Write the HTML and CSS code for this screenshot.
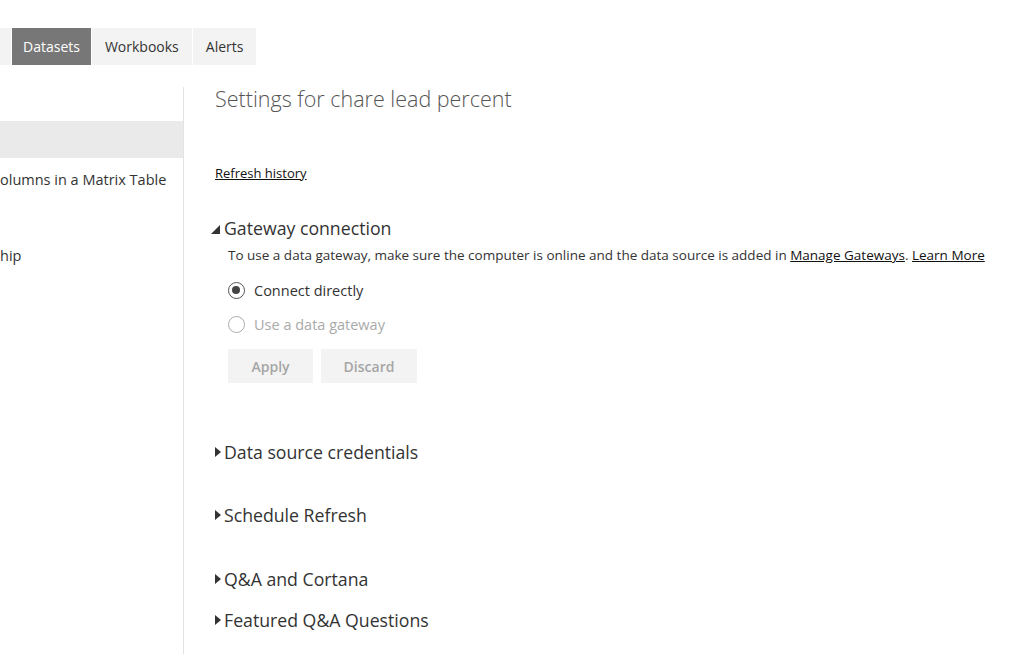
FILE: index.html
```html
<!DOCTYPE html>
<html lang="en">
  <head>
    <meta charset="UTF-8" />
    <title>Settings</title>
    <link rel="stylesheet" href="styles.css">
  </head>
  <body>
    <div class="tabs">
      <div class="tab tab-cut"></div>
      <div class="tab active">Datasets</div>
      <div class="tab">Workbooks</div>
      <div class="tab">Alerts</div>
    </div>

    <div class="page">
      <aside class="sidebar">
        <div class="side-item"></div>
        <div class="side-item selected"></div>
        <div class="side-item matrix">olumns in a Matrix Table</div>
        <div class="side-item spacer"></div>
        <div class="side-item">hip</div>
      </aside>

      <main class="settings">
        <h2 class="title">Settings for chare lead percent</h2>
        <a href="#" class="history-link">Refresh history</a>

        <section class="section open">
          <h3 class="section-head">
            <svg class="arrow-open" width="9" height="9" viewBox="0 0 9 9"><path d="M9 0 L9 9 L0 9 Z" fill="#333"/></svg>
            Gateway connection
          </h3>
          <p class="note">To use a data gateway, make sure the computer is online and the data source is added in <a href="#">Manage Gateways</a>. <a href="#">Learn More</a></p>

          <label class="radio">
            <span class="dot checked"></span>
            Connect directly
          </label>
          <label class="radio disabled">
            <span class="dot"></span>
            Use a data gateway
          </label>

          <div class="buttons">
            <button class="btn btn-apply">Apply</button>
            <button class="btn btn-discard">Discard</button>
          </div>
        </section>

        <h3 class="section-head closed first-closed">
          <svg class="arrow" width="6" height="10" viewBox="0 0 6 10"><path d="M0 0 L6 5 L0 10 Z" fill="#333"/></svg>
          Data source credentials
        </h3>
        <h3 class="section-head closed">
          <svg class="arrow" width="6" height="10" viewBox="0 0 6 10"><path d="M0 0 L6 5 L0 10 Z" fill="#333"/></svg>
          Schedule Refresh
        </h3>
        <h3 class="section-head closed qa">
          <svg class="arrow" width="6" height="10" viewBox="0 0 6 10"><path d="M0 0 L6 5 L0 10 Z" fill="#333"/></svg>
          Q&amp;A and Cortana
        </h3>
        <h3 class="section-head closed tight">
          <svg class="arrow" width="6" height="10" viewBox="0 0 6 10"><path d="M0 0 L6 5 L0 10 Z" fill="#333"/></svg>
          Featured Q&amp;A Questions
        </h3>
      </main>
    </div>
  </body>
</html>
```

FILE: styles.css
```css
* {
  margin: 0;
  padding: 0;
  box-sizing: border-box;
}

body {
  font-family: 'Open Sans', sans-serif;
  color: #333;
  background: #fff;
  overflow: hidden;
  height: 654px;
}

.tabs {
  display: flex;
  gap: 1px;
  padding-top: 28px;
}
.tab {
  height: 37px;
  line-height: 38px;
  padding: 0 13px;
  font-size: 14px;
  background-color: #f3f3f3;
  color: #333;
}
.tab-cut {
  width: 11px;
  padding: 0;
}
.tab.active {
  padding: 0 11px;
  background-color: #777;
  color: #fff;
}

.page {
  display: flex;
  margin-top: 22px;
  height: 567px;
}

.sidebar {
  width: 184px;
  flex-shrink: 0;
  border-right: 1px solid #e3e3e3;
}
.side-item {
  height: 40px;
  line-height: 40px;
  font-size: 14.5px;
  white-space: nowrap;
  overflow: hidden;
}
.side-item:first-child {
  height: 34px;
}
.side-item.selected {
  height: 37px;
  background-color: #eaeaea;
}
.side-item.matrix {
  height: 44px;
  line-height: 44px;
}
.side-item.spacer {
  height: 34px;
}

.settings {
  padding-left: 31px;
}
.title {
  font-size: 21.5px;
  font-weight: 300;
  color: #555;
  line-height: 28px;
  margin-top: -2px;
}
.history-link {
  display: inline-block;
  margin-top: 51px;
  font-size: 13px;
  color: #111;
  line-height: 18px;
}

.section-head {
  display: flex;
  align-items: center;
  gap: 4px;
  font-size: 17.7px;
  font-weight: 400;
  line-height: 24px;
  color: #333;
}
.section.open .section-head {
  margin-top: 33px;
  margin-left: -4px;
}
.arrow-open {
  margin-top: 2px;
}
.note {
  margin-left: 13px;
  margin-top: 6px;
  font-size: 13.5px;
  line-height: 18px;
}
.note a {
  color: #111;
}

.radio {
  display: flex;
  align-items: center;
  gap: 9px;
  margin-left: 13px;
  font-size: 14.5px;
  height: 20px;
  margin-top: 16px;
}
.radio + .radio {
  margin-top: 14px;
}
.radio.disabled {
  color: #aaa;
}
.dot {
  width: 17px;
  height: 17px;
  border: 1.5px solid #555;
  border-radius: 50%;
  position: relative;
}
.dot.checked::after {
  content: '';
  position: absolute;
  left: 3px;
  top: 3px;
  width: 8px;
  height: 8px;
  border-radius: 50%;
  background-color: #444;
}
.radio.disabled .dot {
  border-color: #aaa;
}

.buttons {
  display: flex;
  gap: 8px;
  margin-left: 13px;
  margin-top: 15px;
}
.btn {
  height: 34px;
  border: none;
  background-color: #f3f3f3;
  color: #a6a6a6;
  font-family: 'Open Sans', sans-serif;
  font-size: 14px;
  font-weight: 600;
}
.btn-apply {
  width: 85px;
}
.btn-discard {
  width: 96px;
}

.closed {
  gap: 3px;
}
.first-closed {
  margin-top: 57px;
}
.closed + .closed {
  margin-top: 39px;
}
.closed.qa {
  margin-top: 40px;
}
.closed.tight {
  margin-top: 17px;
}
```
